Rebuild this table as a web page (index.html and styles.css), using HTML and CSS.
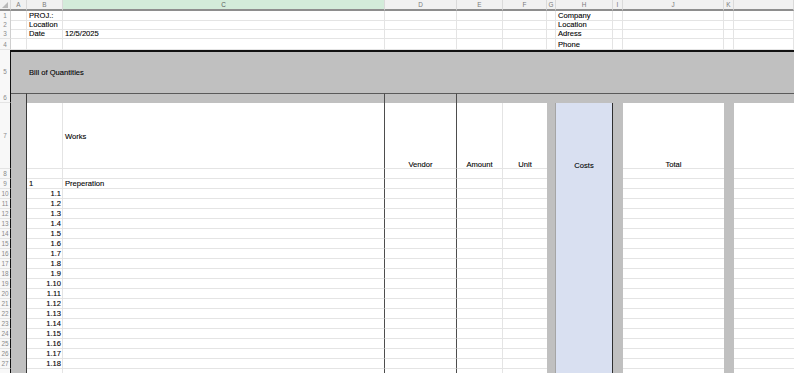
FILE: index.html
```html
<!DOCTYPE html>
<html>
<head>
<meta charset="utf-8">
<title>Bill of Quantities</title>
<link rel="stylesheet" href="styles.css">
</head>
<body>
<div class="sheet">
  <div class="row hdr">
    <div class="corner"><span class="tri"></span></div>
    <div>A</div><div>B</div><div class="sel">C</div><div>D</div><div>E</div><div>F</div><div>G</div><div>H</div><div>I</div><div>J</div><div>K</div><div></div>
  </div>

  <div class="row top h9"><div class="rh">1</div><div class="ca"></div><div class="cb">PROJ.:</div><div class="cc"></div><div class="cd"></div><div class="ce"></div><div class="cf"></div><div class="cg"></div><div class="ch">Company</div><div class="ci"></div><div class="cj"></div><div class="ck"></div><div class="cl"></div></div>
  <div class="row top h9"><div class="rh">2</div><div class="ca"></div><div class="cb">Location</div><div class="cc"></div><div class="cd"></div><div class="ce"></div><div class="cf"></div><div class="cg"></div><div class="ch">Location</div><div class="ci"></div><div class="cj"></div><div class="ck"></div><div class="cl"></div></div>
  <div class="row top h10"><div class="rh">3</div><div class="ca"></div><div class="cb">Date</div><div class="cc">12/5/2025</div><div class="cd"></div><div class="ce"></div><div class="cf"></div><div class="cg"></div><div class="ch">Adress</div><div class="ci"></div><div class="cj"></div><div class="ck"></div><div class="cl"></div></div>
  <div class="row top h11"><div class="rh">4</div><div class="ca"></div><div class="cb"></div><div class="cc"></div><div class="cd"></div><div class="ce"></div><div class="cf"></div><div class="cg"></div><div class="ch">Phone</div><div class="ci"></div><div class="cj"></div><div class="ck"></div><div class="cl"></div></div>

  <div class="row band"><div class="rh">5</div><div class="title">Bill of Quantities</div></div>

  <div class="row sub"><div class="rh">6</div><div class="ca"></div><div class="cb"></div><div class="cc"></div><div class="cd"></div><div class="ce"></div><div class="cf"></div><div class="cg"></div><div class="ch"></div><div class="ci"></div><div class="cj"></div><div class="ck"></div><div class="cl"></div></div>

  <div class="row body tall"><div class="rh">7</div><div class="ca"></div><div class="cb"></div><div class="cc mid">Works</div><div class="cd hd">Vendor</div><div class="ce hd">Amount</div><div class="cf hd">Unit</div><div class="cg"></div><div class="ch hd">Costs</div><div class="ci"></div><div class="cj hd">Total</div><div class="ck"></div><div class="cl"></div></div>

  <div class="row body"><div class="rh">8</div><div class="ca"></div><div class="cb"></div><div class="cc"></div><div class="cd"></div><div class="ce"></div><div class="cf"></div><div class="cg"></div><div class="ch"></div><div class="ci"></div><div class="cj"></div><div class="ck"></div><div class="cl"></div></div>
  <div class="row body"><div class="rh">9</div><div class="ca"></div><div class="cb">1</div><div class="cc">Preperation</div><div class="cd"></div><div class="ce"></div><div class="cf"></div><div class="cg"></div><div class="ch"></div><div class="ci"></div><div class="cj"></div><div class="ck"></div><div class="cl"></div></div>
  <div class="row body"><div class="rh">10</div><div class="ca"></div><div class="cb num">1.1</div><div class="cc"></div><div class="cd"></div><div class="ce"></div><div class="cf"></div><div class="cg"></div><div class="ch"></div><div class="ci"></div><div class="cj"></div><div class="ck"></div><div class="cl"></div></div>
  <div class="row body"><div class="rh">11</div><div class="ca"></div><div class="cb num">1.2</div><div class="cc"></div><div class="cd"></div><div class="ce"></div><div class="cf"></div><div class="cg"></div><div class="ch"></div><div class="ci"></div><div class="cj"></div><div class="ck"></div><div class="cl"></div></div>
  <div class="row body"><div class="rh">12</div><div class="ca"></div><div class="cb num">1.3</div><div class="cc"></div><div class="cd"></div><div class="ce"></div><div class="cf"></div><div class="cg"></div><div class="ch"></div><div class="ci"></div><div class="cj"></div><div class="ck"></div><div class="cl"></div></div>
  <div class="row body"><div class="rh">13</div><div class="ca"></div><div class="cb num">1.4</div><div class="cc"></div><div class="cd"></div><div class="ce"></div><div class="cf"></div><div class="cg"></div><div class="ch"></div><div class="ci"></div><div class="cj"></div><div class="ck"></div><div class="cl"></div></div>
  <div class="row body"><div class="rh">14</div><div class="ca"></div><div class="cb num">1.5</div><div class="cc"></div><div class="cd"></div><div class="ce"></div><div class="cf"></div><div class="cg"></div><div class="ch"></div><div class="ci"></div><div class="cj"></div><div class="ck"></div><div class="cl"></div></div>
  <div class="row body"><div class="rh">15</div><div class="ca"></div><div class="cb num">1.6</div><div class="cc"></div><div class="cd"></div><div class="ce"></div><div class="cf"></div><div class="cg"></div><div class="ch"></div><div class="ci"></div><div class="cj"></div><div class="ck"></div><div class="cl"></div></div>
  <div class="row body"><div class="rh">16</div><div class="ca"></div><div class="cb num">1.7</div><div class="cc"></div><div class="cd"></div><div class="ce"></div><div class="cf"></div><div class="cg"></div><div class="ch"></div><div class="ci"></div><div class="cj"></div><div class="ck"></div><div class="cl"></div></div>
  <div class="row body"><div class="rh">17</div><div class="ca"></div><div class="cb num">1.8</div><div class="cc"></div><div class="cd"></div><div class="ce"></div><div class="cf"></div><div class="cg"></div><div class="ch"></div><div class="ci"></div><div class="cj"></div><div class="ck"></div><div class="cl"></div></div>
  <div class="row body"><div class="rh">18</div><div class="ca"></div><div class="cb num">1.9</div><div class="cc"></div><div class="cd"></div><div class="ce"></div><div class="cf"></div><div class="cg"></div><div class="ch"></div><div class="ci"></div><div class="cj"></div><div class="ck"></div><div class="cl"></div></div>
  <div class="row body"><div class="rh">19</div><div class="ca"></div><div class="cb num">1.10</div><div class="cc"></div><div class="cd"></div><div class="ce"></div><div class="cf"></div><div class="cg"></div><div class="ch"></div><div class="ci"></div><div class="cj"></div><div class="ck"></div><div class="cl"></div></div>
  <div class="row body"><div class="rh">20</div><div class="ca"></div><div class="cb num">1.11</div><div class="cc"></div><div class="cd"></div><div class="ce"></div><div class="cf"></div><div class="cg"></div><div class="ch"></div><div class="ci"></div><div class="cj"></div><div class="ck"></div><div class="cl"></div></div>
  <div class="row body"><div class="rh">21</div><div class="ca"></div><div class="cb num">1.12</div><div class="cc"></div><div class="cd"></div><div class="ce"></div><div class="cf"></div><div class="cg"></div><div class="ch"></div><div class="ci"></div><div class="cj"></div><div class="ck"></div><div class="cl"></div></div>
  <div class="row body"><div class="rh">22</div><div class="ca"></div><div class="cb num">1.13</div><div class="cc"></div><div class="cd"></div><div class="ce"></div><div class="cf"></div><div class="cg"></div><div class="ch"></div><div class="ci"></div><div class="cj"></div><div class="ck"></div><div class="cl"></div></div>
  <div class="row body"><div class="rh">23</div><div class="ca"></div><div class="cb num">1.14</div><div class="cc"></div><div class="cd"></div><div class="ce"></div><div class="cf"></div><div class="cg"></div><div class="ch"></div><div class="ci"></div><div class="cj"></div><div class="ck"></div><div class="cl"></div></div>
  <div class="row body"><div class="rh">24</div><div class="ca"></div><div class="cb num">1.15</div><div class="cc"></div><div class="cd"></div><div class="ce"></div><div class="cf"></div><div class="cg"></div><div class="ch"></div><div class="ci"></div><div class="cj"></div><div class="ck"></div><div class="cl"></div></div>
  <div class="row body"><div class="rh">25</div><div class="ca"></div><div class="cb num">1.16</div><div class="cc"></div><div class="cd"></div><div class="ce"></div><div class="cf"></div><div class="cg"></div><div class="ch"></div><div class="ci"></div><div class="cj"></div><div class="ck"></div><div class="cl"></div></div>
  <div class="row body"><div class="rh">26</div><div class="ca"></div><div class="cb num">1.17</div><div class="cc"></div><div class="cd"></div><div class="ce"></div><div class="cf"></div><div class="cg"></div><div class="ch"></div><div class="ci"></div><div class="cj"></div><div class="ck"></div><div class="cl"></div></div>
  <div class="row body"><div class="rh">27</div><div class="ca"></div><div class="cb num">1.18</div><div class="cc"></div><div class="cd"></div><div class="ce"></div><div class="cf"></div><div class="cg"></div><div class="ch"></div><div class="ci"></div><div class="cj"></div><div class="ck"></div><div class="cl"></div></div>
  <div class="row body"><div class="rh"></div><div class="ca"></div><div class="cb"></div><div class="cc"></div><div class="cd"></div><div class="ce"></div><div class="cf"></div><div class="cg"></div><div class="ch"></div><div class="ci"></div><div class="cj"></div><div class="ck"></div><div class="cl"></div></div>
</div>
</body>
</html>
```

FILE: styles.css
```css
html, body {
  margin: 0;
  padding: 0;
  background: #ffffff;
  overflow: hidden;
}
body {
  font-family: "Liberation Sans", Arial, sans-serif;
  font-size: 7.6px;
  color: #000000;
}
.sheet {
  width: 794px;
  height: 373px;
  overflow: hidden;
}
.row {
  display: grid;
  grid-template-columns: 11px 16px 36px 322px 72px 46px 44px 9px 57px 10px 101px 10px 60px;
  height: 10px;
}
.row > div {
  box-sizing: border-box;
  white-space: nowrap;
  display: flex;
  align-items: center;
  min-width: 0;
  -webkit-text-stroke: 0.1px #000000;
}

/* column header */
.hdr {
  height: 11px;
}
.hdr > div {
  background: #f1f1f1;
  border-right: 1px solid #dadada;
  border-bottom: 2px solid #8e8e8e;
  justify-content: center;
  color: #7a7a7a;
  font-size: 6.4px;
  -webkit-text-stroke: 0;
}
.hdr > .sel {
  background: #d3ecda;
  color: #5a5a5a;
}
.hdr > .corner {
  background: #f1f1f1;
  align-items: flex-end;
  justify-content: flex-end;
  padding: 0 2px 1px 0;
}
.tri {
  width: 0;
  height: 0;
  border-left: 6px solid transparent;
  border-bottom: 6px solid #b9b9b9;
}

/* row header */
.row > .rh {
  background: #f8f8f8;
  color: #8a8a8a;
  font-size: 6.4px;
  justify-content: center;
  border-right: 1px solid #cfcfcf;
  border-bottom: 1px solid #e4e4e4;
  -webkit-text-stroke: 0;
}

/* top info rows */
.h9 { height: 9px; }
.h10 { height: 10px; }
.h11 { height: 11px; }
.top > div:not(.rh) {
  border-right: 1px solid #e4e4e4;
  border-bottom: 1px solid #e4e4e4;
  padding-left: 2px;
}

/* title band */
.band {
  height: 43px;
}
.band > .rh {
  border-right: 1px solid #111111;
  border-bottom: none;
  background: #f8f8f8;
}
.band > .title {
  grid-column: 2 / -1;
  background: #c0c0c0;
  border-top: 2px solid #111111;
  padding-left: 18px;
}

/* sub header band */
.sub > div:not(.rh) {
  background: #c0c0c0;
  border-top: 1px solid #5a5a5a;
}
.sub > .ca {
  border-top: none;
  border-right: 1px solid #3c3c3c;
}
.sub > .cc, .sub > .cd {
  border-right: 1px solid #4d4d4d;
}

/* body rows */
.body > .rh, .sub > .rh {
  border-right: 1px solid #111111;
  border-bottom: 1px solid #e4e4e4;
}
.body > div {
  align-items: flex-end;
  line-height: 9px;
}
.body .ca, .body .cg, .body .ci, .body .ck {
  background: #c0c0c0;
}
.body .ca {
  border-right: 1px solid #3c3c3c;
}
.body .cb, .body .cc, .body .cd, .body .ce, .body .cf, .body .cj, .body .cl {
  background: #ffffff;
  border-bottom: 1px solid #e4e4e4;
  padding-left: 2px;
}
.body .cb, .body .ce {
  border-right: 1px solid #e4e4e4;
}
.body .cc, .body .cd {
  border-right: 1px solid #4d4d4d;
}
.body .cg {
  border-right: 1px solid #a5a5a5;
}
.body .ch {
  background: #d9e0f1;
  border-right: 1px solid #2e2e2e;
}
.body .num {
  justify-content: flex-end;
  padding-right: 1px;
}

/* tall header row */
.tall {
  height: 66px;
}
.tall > .rh {
  align-items: center;
}
.tall > .hd {
  justify-content: center;
  padding-left: 0;
  line-height: 5px;
  padding-bottom: 1px;
}
.tall > .mid {
  align-items: center;
  padding-top: 2px;
}
```
